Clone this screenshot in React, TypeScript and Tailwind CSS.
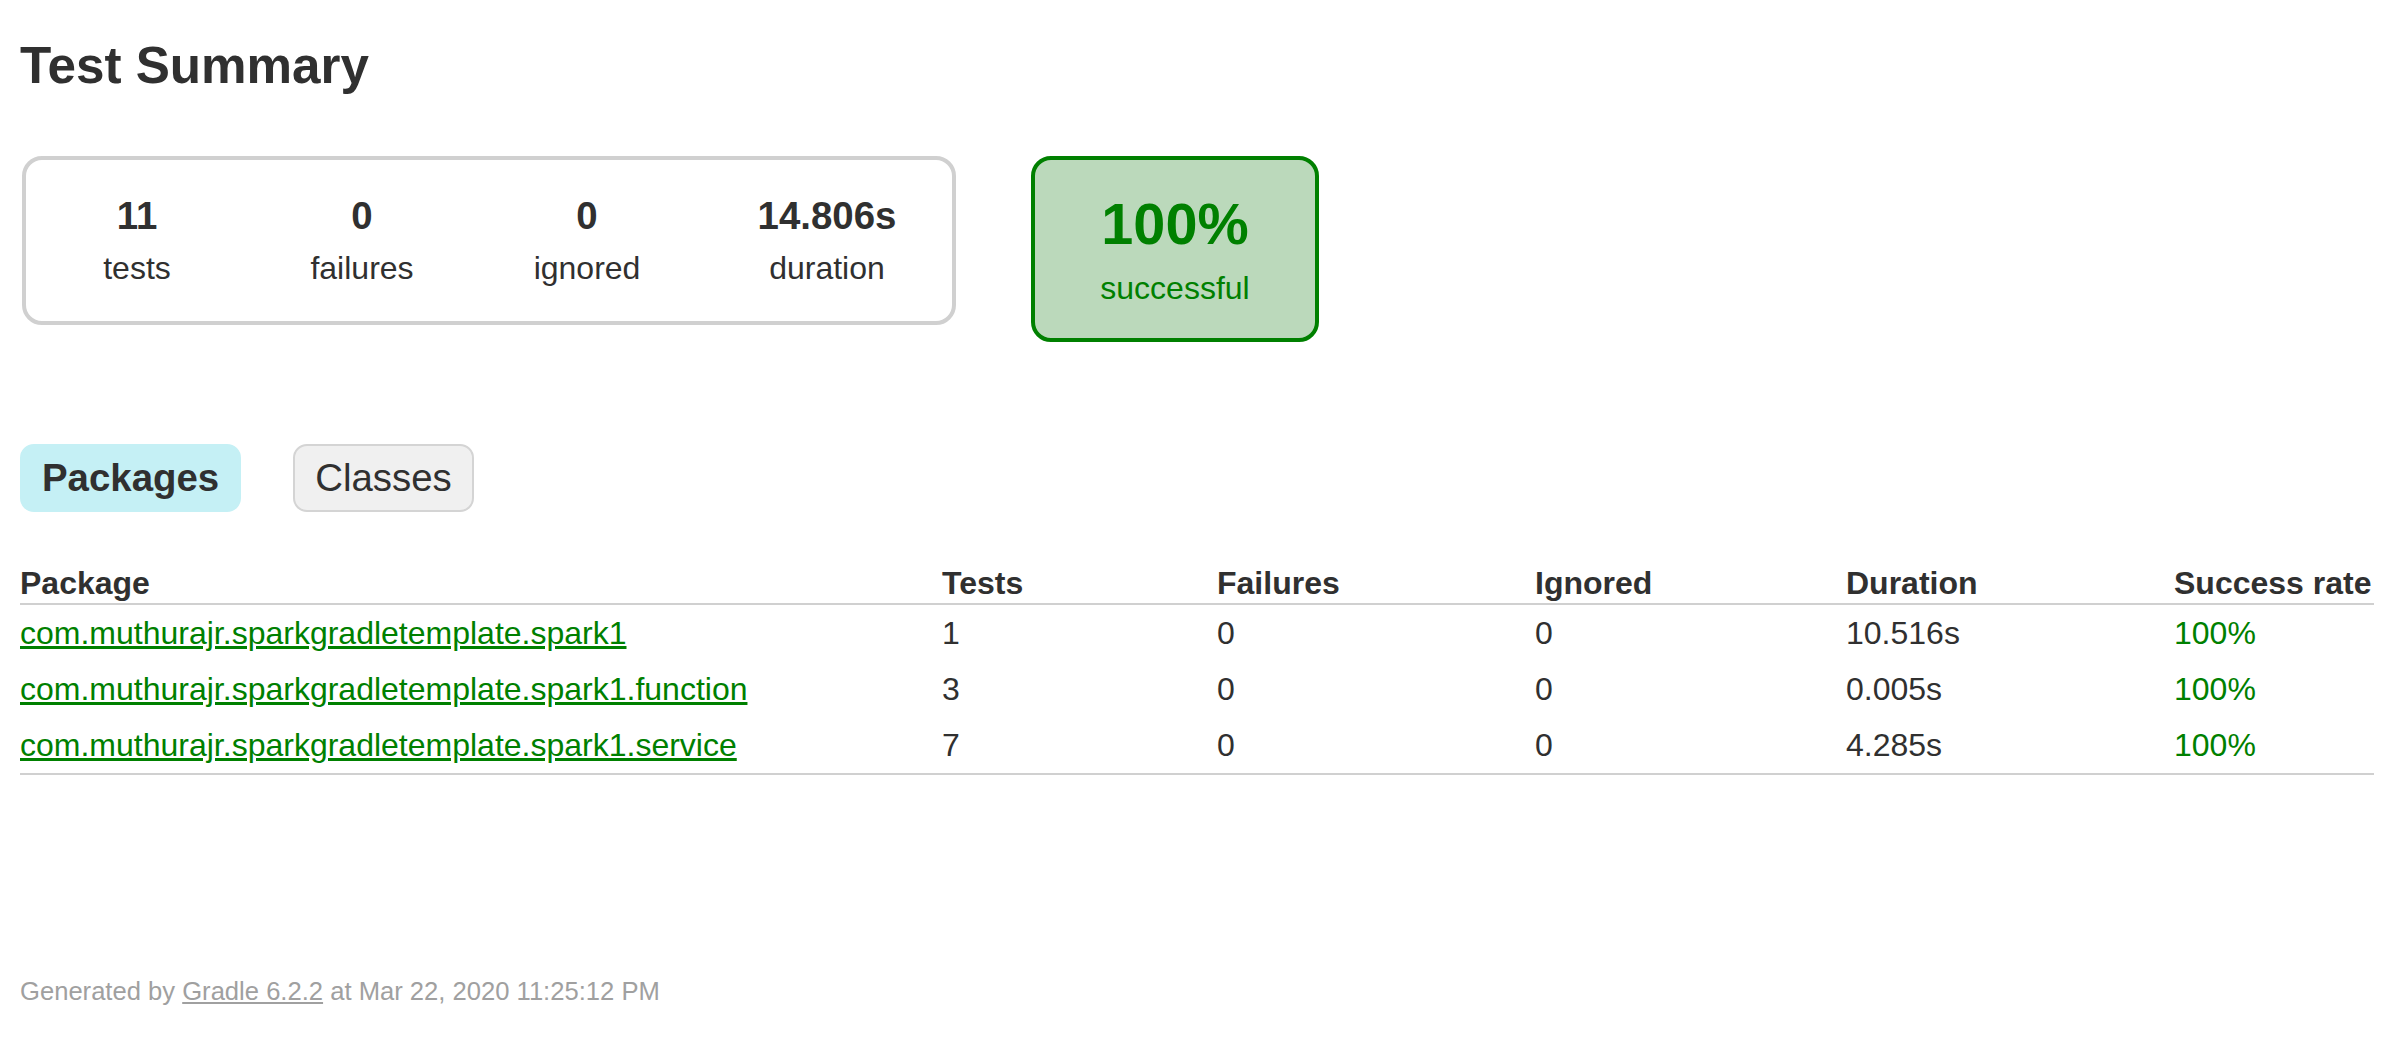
const rows = [
  { name: "com.muthurajr.sparkgradletemplate.spark1", tests: "1", failures: "0", ignored: "0", duration: "10.516s", rate: "100%" },
  { name: "com.muthurajr.sparkgradletemplate.spark1.function", tests: "3", failures: "0", ignored: "0", duration: "0.005s", rate: "100%" },
  { name: "com.muthurajr.sparkgradletemplate.spark1.service", tests: "7", failures: "0", ignored: "0", duration: "4.285s", rate: "100%" },
];

function InfoBox({ value, label, wide }: { value: string; label: string; wide?: boolean }) {
  return (
    <div className={wide ? "w-[250px] pt-[33px] pb-[33px] text-center" : "w-[220px] pt-[33px] pb-[33px] text-center"}>
      <p className="text-[38.4px] leading-[44px] font-bold">{value}</p>
      <p className="mt-[12px] text-[32px] leading-[37px]">{label}</p>
    </div>
  );
}

export default function App() {
  return (
    <div className="min-h-screen bg-white pl-[20px] pt-[36px] font-['Liberation_Sans',Arial,Helvetica,sans-serif] text-[#303030]">
      <h1 className="whitespace-nowrap text-[51.2px] leading-[59px] font-bold">Test Summary</h1>

      <div className="mt-[61px] flex items-start">
        <div className="ml-[2px] flex w-[934px] gap-[5px] rounded-[20px] border-[4px] border-[#d0d0d0] pl-[1px] py-[1px]">
          <InfoBox value="11" label="tests" />
          <InfoBox value="0" label="failures" />
          <InfoBox value="0" label="ignored" />
          <InfoBox value="14.806s" label="duration" wide />
        </div>
        <div className="ml-[75px] w-[288px] rounded-[20px] border-[4px] border-[#008000] bg-[#bbd9bb] pt-[31px] pb-[31px] text-center text-[#008000]">
          <p className="text-[57.6px] leading-[66px] font-bold">100%</p>
          <p className="mt-[13px] text-[32px] leading-[37px]">successful</p>
        </div>
      </div>

      <ul className="mt-[102px] flex gap-[52px]">
        <li className="rounded-[14px] border-[2px] border-[#c5f0f5] bg-[#c5f0f5] px-[20px] py-[10px] text-[38.4px] leading-[44px] font-bold">
          <a href="#tab0">Packages</a>
        </li>
        <li className="rounded-[14px] border-[2px] border-[#d4d4d4] bg-[#f0f0f0] px-[20px] py-[10px] text-[38.4px] leading-[44px]">
          <a href="#tab1">Classes</a>
        </li>
      </ul>

      <table className="mt-[53px] w-[2354px] table-fixed border-collapse text-[32px]">
        <colgroup>
          <col className="w-[922px]" />
          <col className="w-[275px]" />
          <col className="w-[318px]" />
          <col className="w-[311px]" />
          <col className="w-[328px]" />
          <col className="w-[200px]" />
        </colgroup>
        <thead>
          <tr>
            {["Package", "Tests", "Failures", "Ignored", "Duration", "Success rate"].map((h) => (
              <th key={h} className="whitespace-nowrap border-b-[2px] border-[#d0d0d0] p-0 pb-[2px] text-left leading-[36px] font-bold">
                {h}
              </th>
            ))}
          </tr>
        </thead>
        <tbody>
          {rows.map((r, i) => {
            const b = i === rows.length - 1 ? " border-b-[2px] border-[#d0d0d0]" : "";
            return (
              <tr key={r.name}>
                <td className={"whitespace-nowrap p-0 py-[10px] leading-[36px]" + b}>
                  <a href="#" className="text-[#008000] underline">{r.name}</a>
                </td>
                <td className={"p-0 py-[10px] leading-[36px]" + b}>{r.tests}</td>
                <td className={"p-0 py-[10px] leading-[36px]" + b}>{r.failures}</td>
                <td className={"p-0 py-[10px] leading-[36px]" + b}>{r.ignored}</td>
                <td className={"p-0 py-[10px] leading-[36px]" + b}>{r.duration}</td>
                <td className={"p-0 py-[10px] leading-[36px] text-[#008000]" + b}>{r.rate}</td>
              </tr>
            );
          })}
        </tbody>
      </table>

      <div className="mt-[202px] whitespace-nowrap text-[25.6px] leading-[29px] text-[#a0a0a0]">
        Generated by <a href="#" className="text-[#a0a0a0] underline">Gradle 6.2.2</a> at Mar 22, 2020 11:25:12 PM
      </div>
    </div>
  );
}
